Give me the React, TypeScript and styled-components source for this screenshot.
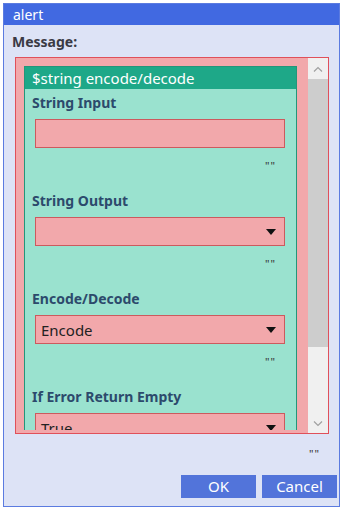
import React from "react";
import styled, { createGlobalStyle } from "styled-components";

const Global = createGlobalStyle`
  html, body { margin: 0; padding: 0; background: #ffffff; }
  body { font-family: "Noto Sans", "Open Sans", sans-serif; }
  * { box-sizing: border-box; }
`;

const Window = styled.div`
  margin: 3px 0 0 3px;
  width: 337px;
  height: 504px;
  border: 1px solid #5b7be0;
  background: #dde3f6;
  display: flex;
  flex-direction: column;
`;

const TitleBar = styled.div`
  height: 21px;
  background: #4169e1;
  color: #ffffff;
  font-size: 14px;
  line-height: 21px;
  padding-left: 9px;
`;

const Body = styled.div`
  flex: 1;
  display: flex;
  flex-direction: column;
  padding: 7px 0 0 0;
`;

const MessageLabel = styled.div`
  font-weight: bold;
  font-size: 14px;
  line-height: 20px;
  color: #3a3a44;
  padding-left: 8px;
`;

const RedBox = styled.div`
  margin: 5px 10px 0 11px;
  height: 377px;
  border: 1px solid #e0505a;
  background: #f2a8ab;
  display: flex;
`;

const Viewport = styled.div`
  flex: 1;
  overflow: hidden;
  margin: 8px 11px 3px 8px;
`;

const GreenPanel = styled.div`
  border: 1px solid #23967a;
  border-bottom: none;
  background: #9ae2cf;
`;

const PanelHeader = styled.div`
  height: 22px;
  background: #1ea888;
  color: #ffffff;
  font-size: 15px;
  line-height: 22px;
  padding-left: 7px;
`;

const PanelBody = styled.div`
  padding: 4px 11px 20px 0;
`;

const Field = styled.div`
  display: flex;
  flex-direction: column;
  margin-bottom: 18px;
`;

const FieldLabel = styled.div`
  font-weight: bold;
  font-size: 14px;
  line-height: 20px;
  color: #2c4a6c;
  padding-left: 7px;
`;

const InputBox = styled.div`
  margin: 6px 0 0 10px;
  height: 29px;
  border: 1px solid #cc5a5e;
  background: #f2a8ab;
  display: flex;
  align-items: center;
  justify-content: space-between;
  padding: 0 8px 0 5px;
  font-size: 15px;
  color: #222222;
`;

const Arrow = styled.span`
  width: 0;
  height: 0;
  border-left: 5px solid transparent;
  border-right: 5px solid transparent;
  border-top: 6px solid #111111;
`;

const Marker = styled.div<{ $right: number }>`
  margin-top: 11px;
  height: 14px;
  line-height: 14px;
  font-size: 11px;
  color: #333333;
  text-align: right;
  padding-right: ${(p) => p.$right}px;
  letter-spacing: 1px;
`;

const Scrollbar = styled.div`
  width: 20px;
  display: flex;
  flex-direction: column;
`;

const ScrollButton = styled.div<{ $h: number }>`
  height: ${(p) => p.$h}px;
  background: #f0f0f0;
  display: flex;
  align-items: center;
  justify-content: center;
`;

const Thumb = styled.div`
  height: 268px;
  background: #cdcdcd;
`;

const Track = styled.div`
  flex: 1;
  background: #f0f0f0;
`;

const Footer = styled.div`
  margin-top: 13px;
  font-size: 11px;
  color: #333333;
  text-align: right;
  padding-right: 19px;
  height: 14px;
  line-height: 14px;
  letter-spacing: 1px;
`;

const Buttons = styled.div`
  margin-top: 14px;
  display: flex;
  justify-content: flex-end;
  gap: 6px;
  padding-right: 2px;
`;

const Button = styled.button`
  width: 75px;
  height: 23px;
  border: none;
  background: #5274da;
  color: #ffffff;
  font-family: "Noto Sans", "Open Sans", sans-serif;
  font-size: 15px;
  line-height: 23px;
  padding: 0;
`;

const Chevron = ({ up }: { up: boolean }) => (
  <svg width="10" height="6" viewBox="0 0 10 6">
    <path
      d={up ? "M1 5.5 L5 1.5 L9 5.5" : "M1 0.5 L5 4.5 L9 0.5"}
      fill="none"
      stroke="#a0a0a0"
      strokeWidth="1.2"
    />
  </svg>
);

const fields: { label: string; value: string; select: boolean }[] = [
  { label: "String Input", value: "", select: false },
  { label: "String Output", value: "", select: true },
  { label: "Encode/Decode", value: "Encode", select: true },
  { label: "If Error Return Empty", value: "True", select: true },
];

export default function App() {
  return (
    <>
      <Global />
      <Window>
        <TitleBar>alert</TitleBar>
        <Body>
          <MessageLabel>Message:</MessageLabel>
          <RedBox>
            <Viewport>
              <GreenPanel>
                <PanelHeader>$string encode/decode</PanelHeader>
                <PanelBody>
                  {fields.map((f) => (
                    <Field key={f.label}>
                      <FieldLabel>{f.label}</FieldLabel>
                      <InputBox>
                        <span>{f.value}</span>
                        {f.select && <Arrow />}
                      </InputBox>
                      <Marker $right={9}>""</Marker>
                    </Field>
                  ))}
                </PanelBody>
              </GreenPanel>
            </Viewport>
            <Scrollbar>
              <ScrollButton $h={21}>
                <Chevron up={true} />
              </ScrollButton>
              <Thumb />
              <Track />
              <ScrollButton $h={18}>
                <Chevron up={false} />
              </ScrollButton>
            </Scrollbar>
          </RedBox>
          <Footer>""</Footer>
          <Buttons>
            <Button>OK</Button>
            <Button>Cancel</Button>
          </Buttons>
        </Body>
      </Window>
    </>
  );
}
